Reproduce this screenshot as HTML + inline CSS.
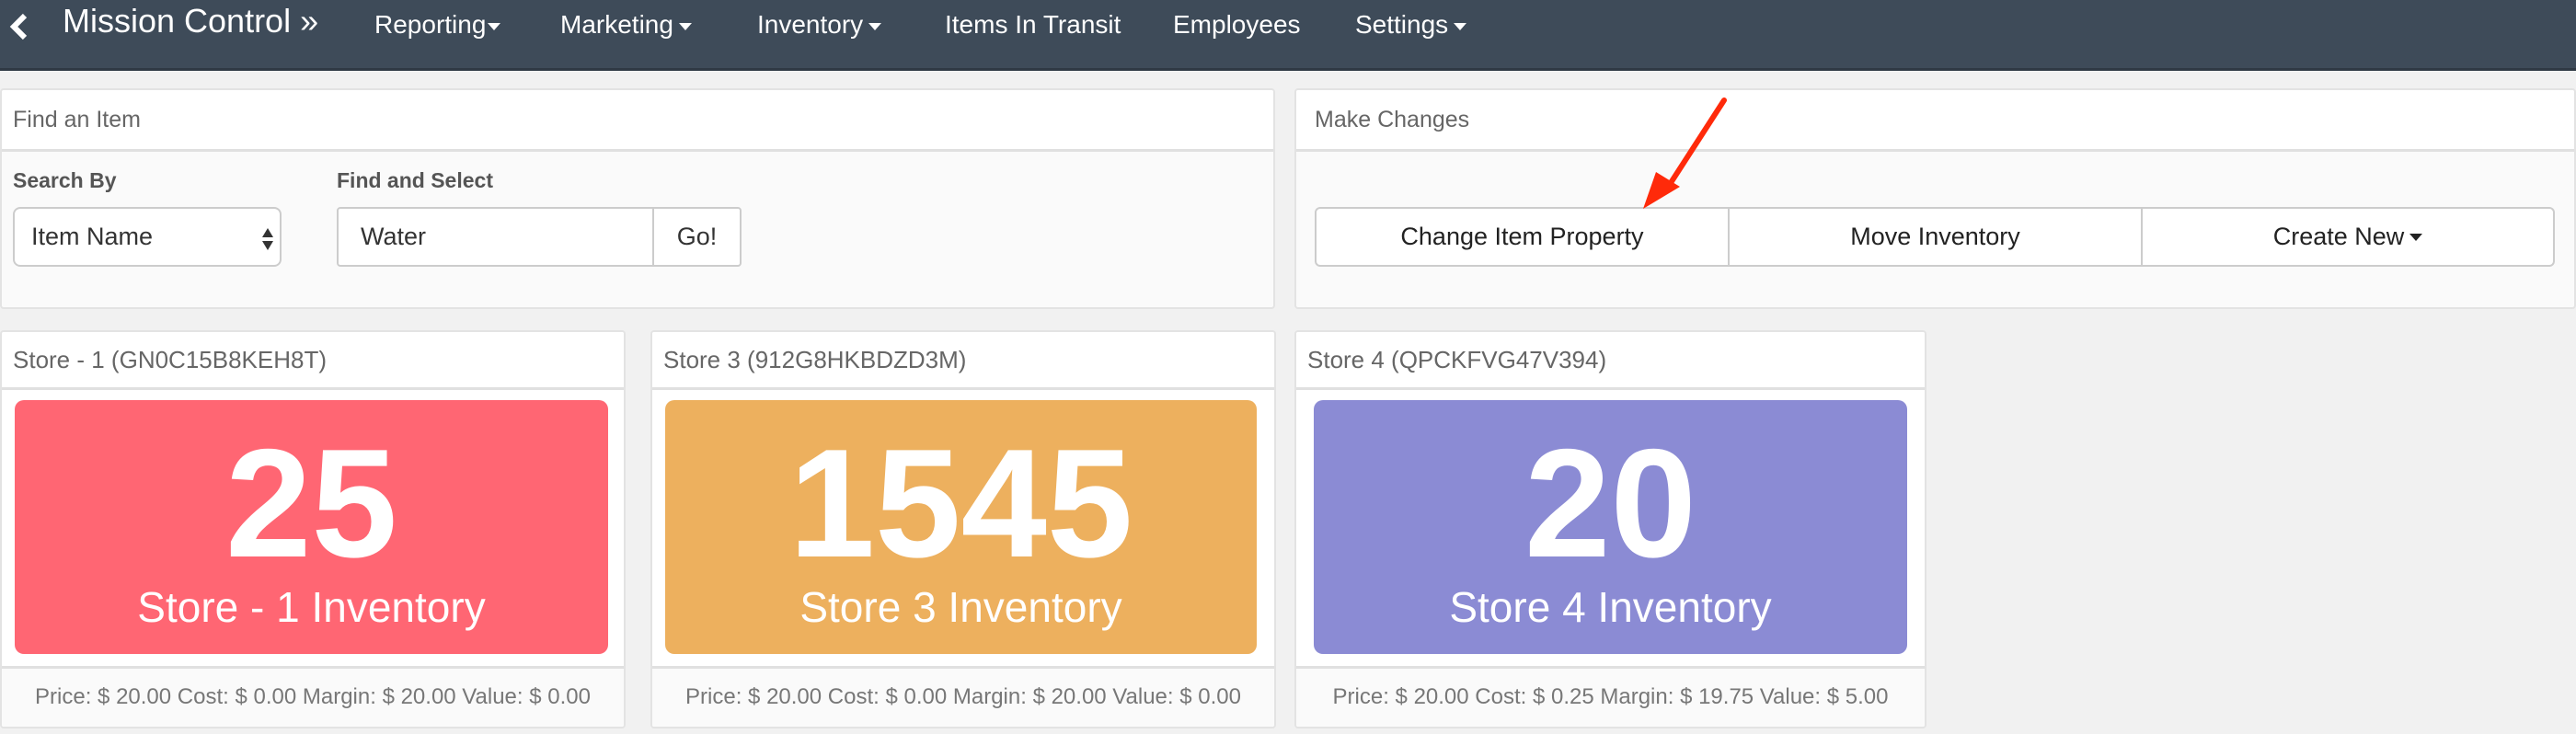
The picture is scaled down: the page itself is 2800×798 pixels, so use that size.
<!DOCTYPE html>
<html><head><meta charset="utf-8"><style>
*{box-sizing:border-box;margin:0;padding:0}
body{width:2800px;height:798px;background:#f1f1f1;font-family:"Liberation Sans",Arial,sans-serif;position:relative;overflow:hidden}
.nav{position:absolute;left:0;top:0;width:2800px;height:77px;background:#3e4b59;border-bottom:3px solid #2f3944}
.nav span{position:absolute;top:7px;color:#fff;font-size:28px;line-height:40px}
.caret{display:inline-block;width:0;height:0;border-left:7px solid transparent;border-right:7px solid transparent;border-top:8px solid #fff;vertical-align:middle;margin-left:6px}
.panel{position:absolute;background:#fafafa;border:2px solid #e3e3e3;border-radius:4px;overflow:hidden}
.ph{background:#fff;border-bottom:3px solid #e0e0e0;color:#666;font-size:25px;padding-left:12px}
.lbl{position:absolute;font-weight:bold;color:#555;font-size:23px}
.box{position:absolute;background:#fff;border:2px solid #ccc;font-size:27px;color:#333;display:flex;align-items:center}
.btn{position:absolute;top:225px;height:65px;background:#fff;border:2px solid #ccc;font-size:27px;color:#222;display:flex;align-items:center;justify-content:center}
.big{position:absolute;left:14px;top:74px;border-radius:10px;color:#fff;text-align:center}
.big .n{position:absolute;left:0;right:0;top:28px;font-size:168px;font-weight:bold;line-height:1}
.big .t{position:absolute;left:0;right:0;top:202px;font-size:46px;line-height:1}
.ft{position:absolute;left:0;right:0;bottom:0;height:66px;border-top:3px solid #e0e0e0;color:#777;font-size:24px;text-align:center;line-height:62px;background:#fafafa}
.sh{font-size:26px}
</style></head><body>
<div class="nav">
<svg style="position:absolute;left:8px;top:14px" width="26" height="30" viewBox="0 0 26 30"><path d="M19 3 L7 15 L19 27" stroke="#fff" stroke-width="6" fill="none"/></svg>
<span style="left:68px;font-size:36px;top:3px">Mission Control »</span>
<span style="left:407px">Reporting<i class="caret" style="margin-left:2px"></i></span>
<span style="left:609px">Marketing<i class="caret"></i></span>
<span style="left:823px">Inventory<i class="caret"></i></span>
<span style="left:1027px">Items In Transit</span>
<span style="left:1275px">Employees</span>
<span style="left:1473px">Settings<i class="caret"></i></span>
</div>

<div class="panel" style="left:0;top:96px;width:1386px;height:240px">
<div class="ph" style="height:67px;line-height:64px">Find an Item</div>
</div>
<div class="lbl" style="left:14px;top:183px">Search By</div>
<div class="lbl" style="left:366px;top:183px">Find and Select</div>
<div class="box" style="left:14px;top:225px;width:292px;height:65px;border-radius:8px;padding-left:18px">Item Name
<svg style="position:absolute;right:6px;top:20px" width="14" height="26" viewBox="0 0 14 26"><path d="M7 1 L13 11 L1 11Z M7 25 L13 15 L1 15Z" fill="#333"/></svg></div>
<div class="box" style="left:366px;top:225px;width:345px;height:65px;border-radius:4px 0 0 4px;padding-left:24px">Water</div>
<div class="box" style="left:709px;top:225px;width:97px;height:65px;border-radius:0 4px 4px 0;justify-content:center">Go!</div>

<div class="panel" style="left:1407px;top:96px;width:1393px;height:240px">
<div class="ph" style="height:67px;line-height:64px;padding-left:20px">Make Changes</div>
</div>
<div class="btn" style="left:1429px;width:451px;border-radius:6px 0 0 6px">Change Item Property</div>
<div class="btn" style="left:1878px;width:451px">Move Inventory</div>
<div class="btn" style="left:2327px;width:450px;border-radius:0 6px 6px 0">Create New<i class="caret" style="border-top-color:#222"></i></div>

<svg style="position:absolute;left:1770px;top:105px" width="120" height="135" viewBox="0 0 120 135"><path d="M104 4 L42 100" stroke="#ff2a0a" stroke-width="6" fill="none" stroke-linecap="round"/><path d="M16 122 L30 82 L56 98Z" fill="#ff2a0a"/></svg>

<div class="panel" style="left:0;top:359px;width:680px;height:433px;background:#fff">
<div class="ph sh" style="height:63px;line-height:60px">Store - 1 (GN0C15B8KEH8T)</div>
<div class="big" style="background:#ff6673;width:645px;height:276px"><div class="n">25</div><div class="t">Store - 1 Inventory</div></div>
<div class="ft">Price: $ 20.00 Cost: $ 0.00 Margin: $ 20.00 Value: $ 0.00</div>
</div>
<div class="panel" style="left:707px;top:359px;width:680px;height:433px;background:#fff">
<div class="ph sh" style="height:63px;line-height:60px">Store 3 (912G8HKBDZD3M)</div>
<div class="big" style="background:#edb05e;width:643px;height:276px"><div class="n">1545</div><div class="t">Store 3 Inventory</div></div>
<div class="ft">Price: $ 20.00 Cost: $ 0.00 Margin: $ 20.00 Value: $ 0.00</div>
</div>
<div class="panel" style="left:1407px;top:359px;width:687px;height:433px;background:#fff">
<div class="ph sh" style="height:63px;line-height:60px">Store 4 (QPCKFVG47V394)</div>
<div class="big" style="background:#8b8bd4;width:645px;height:276px;left:19px"><div class="n">20</div><div class="t">Store 4 Inventory</div></div>
<div class="ft">Price: $ 20.00 Cost: $ 0.25 Margin: $ 19.75 Value: $ 5.00</div>
</div>
</body></html>
